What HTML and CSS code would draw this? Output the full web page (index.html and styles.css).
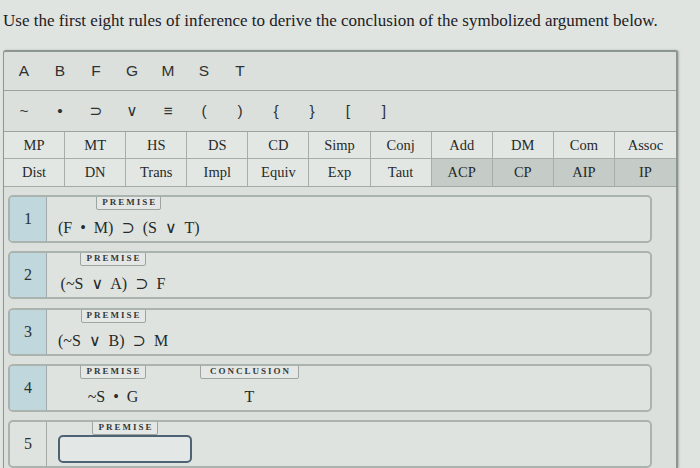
FILE: index.html
```html
<!DOCTYPE html>
<html>
<head>
<meta charset="utf-8">
<link rel="stylesheet" href="styles.css">
</head>
<body>
<p class="title">Use the first eight rules of inference to derive the conclusion of the symbolized argument below.</p>
<div class="panel">
  <div class="symrow">
    <span class="sym">A</span><span class="sym">B</span><span class="sym">F</span><span class="sym">G</span><span class="sym">M</span><span class="sym">S</span><span class="sym">T</span>
  </div>
  <div class="symrow ops">
    <span class="sym">~</span><span class="sym">•</span><span class="sym">⊃</span><span class="sym">∨</span><span class="sym">≡</span><span class="sym">(</span><span class="sym">)</span><span class="sym">{</span><span class="sym">}</span><span class="sym">[</span><span class="sym">]</span>
  </div>
  <div class="rules">
    <span class="rule">MP</span><span class="rule">MT</span><span class="rule">HS</span><span class="rule">DS</span><span class="rule">CD</span><span class="rule">Simp</span><span class="rule">Conj</span><span class="rule">Add</span><span class="rule">DM</span><span class="rule">Com</span><span class="rule">Assoc</span>
    <span class="rule">Dist</span><span class="rule">DN</span><span class="rule">Trans</span><span class="rule">Impl</span><span class="rule">Equiv</span><span class="rule">Exp</span><span class="rule">Taut</span><span class="rule dark">ACP</span><span class="rule dark">CP</span><span class="rule dark">AIP</span><span class="rule dark">IP</span>
  </div>
  <div class="proof">
    <div class="line">
      <div class="num">1</div>
      <div class="content">
        <div class="item"><span class="tag">PREMISE</span><span class="formula">(F • M) ⊃ (S ∨ T)</span></div>
      </div>
    </div>
    <div class="line">
      <div class="num">2</div>
      <div class="content">
        <div class="item"><span class="tag">PREMISE</span><span class="formula">(~S ∨ A) ⊃ F</span></div>
      </div>
    </div>
    <div class="line">
      <div class="num">3</div>
      <div class="content">
        <div class="item"><span class="tag">PREMISE</span><span class="formula">(~S ∨ B) ⊃ M</span></div>
      </div>
    </div>
    <div class="line">
      <div class="num">4</div>
      <div class="content">
        <div class="item"><span class="tag">PREMISE</span><span class="formula">~S • G</span></div>
        <div class="item conclusion"><span class="tag wide">CONCLUSION</span><span class="formula">T</span></div>
      </div>
    </div>
    <div class="line">
      <div class="num plain">5</div>
      <div class="content">
        <div class="item"><span class="tag">PREMISE</span><span class="entry"></span></div>
      </div>
    </div>
  </div>
</div>
</body>
</html>
```
FILE: styles.css
```css
html, body {
  margin: 0;
  padding: 0;
}
body {
  background: #e0e4e1;
  font-family: "Liberation Serif", "DejaVu Serif", serif;
  color: #222624;
  width: 700px;
  height: 468px;
  overflow: hidden;
}
.title {
  margin: 0;
  height: 50px;
  box-sizing: border-box;
  padding: 11px 0 0 3px;
  font-size: 17px;
  line-height: 20px;
  color: #1c201e;
  white-space: nowrap;
}
.panel {
  margin-left: 3px;
  width: 675px;
  height: 418px;
  box-sizing: border-box;
  border: 1px solid #8f9994;
  border-top: 2px solid #8c9691;
  border-right: 2px solid #8c9691;
  border-bottom: none;
  border-radius: 3px 3px 0 0;
  background: #dce0dd;
  box-shadow: 1px 0 2px rgba(80, 90, 85, 0.35);
}
.symrow {
  display: flex;
  align-items: center;
  height: 38px;
  padding-left: 2px;
  border-bottom: 1px solid #9aa39e;
}
.symrow.ops {
  height: 40px;
}
.sym {
  width: 36px;
  text-align: center;
  font-family: "Liberation Sans", "DejaVu Sans", sans-serif;
  font-size: 15.5px;
  color: #2e3230;
}
.rules {
  display: grid;
  grid-template-columns: repeat(11, 1fr);
  grid-auto-rows: 27px;
  border-bottom: 1px solid #a3aba6;
}
.rule {
  display: flex;
  align-items: center;
  justify-content: center;
  background: #e3e7e4;
  border-right: 1px solid #a7aeaa;
  border-bottom: 1px solid #a7aeaa;
  font-size: 14.5px;
  color: #262a28;
}
.rule:nth-child(11n) {
  border-right: none;
}
.rule:nth-child(n+12) {
  border-bottom: none;
}
.rule.dark {
  background: #c5ccc7;
}
.proof {
  padding: 8px 0 0 4px;
}
.line {
  display: flex;
  width: 644px;
  height: 48px;
  box-sizing: border-box;
  margin-bottom: 8.25px;
  border: 2px solid #abb3ae;
  border-radius: 5px;
  overflow: hidden;
  background: #dfe3e0;
}
.num {
  width: 36px;
  flex: none;
  display: flex;
  align-items: center;
  justify-content: center;
  background: #bfd7dd;
  border-right: 1px solid #a3abaa;
  font-size: 16px;
  color: #2c302e;
}
.num.plain {
  background: transparent;
}
.content {
  display: flex;
  align-items: flex-start;
  gap: 32px;
  padding-left: 11px;
}
.item {
  display: flex;
  flex-direction: column;
  align-items: center;
  min-width: 110px;
}
.item.conclusion {
  min-width: 0;
}
.tag {
  margin-top: -2px;
  padding: 1px 3px 1px 5px;
  border: 1px solid #9ea5a1;
  border-radius: 2px;
  background: #e4e7e5;
  font-size: 9px;
  line-height: 11px;
  font-weight: bold;
  letter-spacing: 2px;
  color: #343936;
}
.tag.wide {
  padding: 1px 7px 1px 9px;
}
.formula {
  margin-top: 6px;
  font-size: 16px;
  line-height: 24px;
  word-spacing: 4px;
  white-space: nowrap;
  color: #262a28;
}
.entry {
  display: block;
  width: 134px;
  height: 28px;
  box-sizing: border-box;
  border: 2px solid #4d6373;
  border-radius: 5px;
  background: #e3e7e5;
}
```
